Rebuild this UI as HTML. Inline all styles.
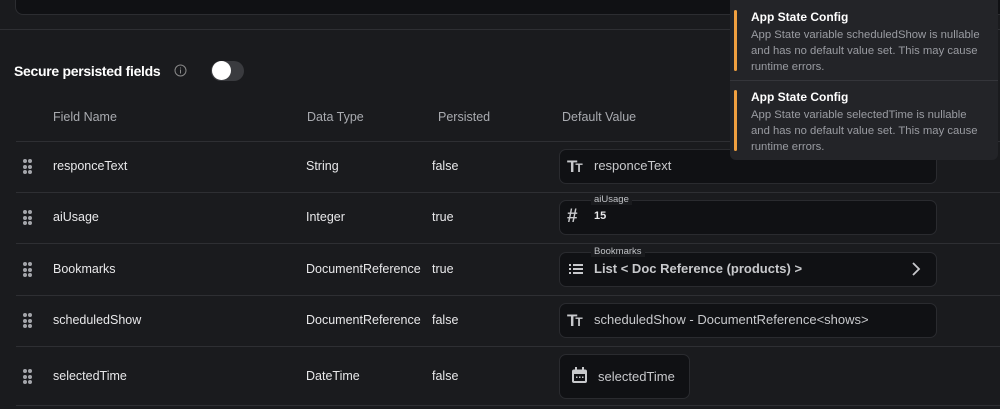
<!DOCTYPE html>
<html><head><style>
body{margin:0;width:1000px;height:409px;background:#1a1b1e;font-family:"Liberation Sans",sans-serif;overflow:hidden;position:relative;color:#e8e8ea}
.a{position:absolute}
.top{left:15px;top:-20px;width:1000px;height:33px;background:#101114;border:1px solid #2c2d31;border-radius:8px}
.hl{height:1px;background:#2e2f33}
.t{font-size:12.5px;white-space:nowrap}
.h{font-size:12.5px;color:#a9abb0;white-space:nowrap}
.box{background:#101114;border:1px solid #2a2b2f;border-radius:7px}
.dr{width:9px;height:15px}
.dr i{position:absolute;width:4px;height:4px;border-radius:50%;background:#a4a6ab}
.toast{left:730px;width:268px;background:#232428;}
.ob{width:3px;background:#f0a040;border-radius:2px}
.tt{font-size:12px;font-weight:bold;color:#fff}
.tb{font-size:11.3px;color:#9a9ca2;line-height:16px}
.lbl{font-size:9.5px;color:#bfc1c5;background:#1a1b1e;padding:0 3px}
</style></head><body>
<div class="a top"></div>
<div class="a hl" style="left:0;top:29px;width:1000px"></div>
<div class="a t" style="left:14px;top:63px;font-size:14px;font-weight:bold;color:#fff;letter-spacing:-0.3px">Secure persisted fields</div>
<svg class="a" style="left:174px;top:64px" width="13" height="13" viewBox="0 0 13 13"><circle cx="6.5" cy="6.5" r="5.5" fill="none" stroke="#888" stroke-width="1"/><rect x="6" y="5.5" width="1" height="4" fill="#888"/><rect x="6" y="3.5" width="1" height="1" fill="#888"/></svg>
<div class="a" style="left:211px;top:61px;width:33px;height:20px;border-radius:10px;background:#3a3b3f"></div>
<div class="a" style="left:212px;top:61px;width:19px;height:19px;border-radius:50%;background:#fff"></div>
<div class="a h" style="left:53px;top:110px">Field Name</div>
<div class="a h" style="left:307px;top:110px">Data Type</div>
<div class="a h" style="left:438px;top:110px">Persisted</div>
<div class="a h" style="left:562px;top:110px">Default Value</div>
<div class="a hl" style="left:16px;top:141px;width:984px"></div>
<div class="a hl" style="left:16px;top:192px;width:984px"></div>
<div class="a hl" style="left:16px;top:243px;width:984px"></div>
<div class="a hl" style="left:16px;top:295px;width:984px"></div>
<div class="a hl" style="left:16px;top:346px;width:984px"></div>
<div class="a hl" style="left:16px;top:405px;width:984px"></div>

<div class="a t" style="left:53px;top:159px">responceText</div><div class="a t" style="left:306px;top:159px">String</div><div class="a t" style="left:432px;top:159px">false</div>
<div class="a t" style="left:53px;top:210px">aiUsage</div><div class="a t" style="left:306px;top:210px">Integer</div><div class="a t" style="left:432px;top:210px">true</div>
<div class="a t" style="left:53px;top:262px">Bookmarks</div><div class="a t" style="left:306px;top:262px">DocumentReference</div><div class="a t" style="left:432px;top:262px">true</div>
<div class="a t" style="left:53px;top:313px">scheduledShow</div><div class="a t" style="left:306px;top:313px">DocumentReference</div><div class="a t" style="left:432px;top:313px">false</div>
<div class="a t" style="left:53px;top:369px">selectedTime</div><div class="a t" style="left:306px;top:369px">DateTime</div><div class="a t" style="left:432px;top:369px">false</div>

<div class="a dr" style="left:23px;top:159px"><i style="left:0;top:0"></i><i style="left:5px;top:0"></i><i style="left:0;top:5.5px"></i><i style="left:5px;top:5.5px"></i><i style="left:0;top:11px"></i><i style="left:5px;top:11px"></i></div>
<div class="a dr" style="left:23px;top:210px"><i style="left:0;top:0"></i><i style="left:5px;top:0"></i><i style="left:0;top:5.5px"></i><i style="left:5px;top:5.5px"></i><i style="left:0;top:11px"></i><i style="left:5px;top:11px"></i></div>
<div class="a dr" style="left:23px;top:262px"><i style="left:0;top:0"></i><i style="left:5px;top:0"></i><i style="left:0;top:5.5px"></i><i style="left:5px;top:5.5px"></i><i style="left:0;top:11px"></i><i style="left:5px;top:11px"></i></div>
<div class="a dr" style="left:23px;top:313px"><i style="left:0;top:0"></i><i style="left:5px;top:0"></i><i style="left:0;top:5.5px"></i><i style="left:5px;top:5.5px"></i><i style="left:0;top:11px"></i><i style="left:5px;top:11px"></i></div>
<div class="a dr" style="left:23px;top:369px"><i style="left:0;top:0"></i><i style="left:5px;top:0"></i><i style="left:0;top:5.5px"></i><i style="left:5px;top:5.5px"></i><i style="left:0;top:11px"></i><i style="left:5px;top:11px"></i></div>

<div class="a box" style="left:559px;top:149px;width:376px;height:33px"></div>
<div class="a" style="left:567px;top:157px;font-size:17px;font-weight:bold;color:#c8c9cc;letter-spacing:-2px">T<span style="font-size:12px">T</span></div>
<div class="a t" style="left:594px;top:158px;color:#c8c9cc;font-size:13px">responceText</div>

<div class="a box" style="left:559px;top:200px;width:376px;height:33px"></div>
<div class="a lbl" style="left:591px;top:194px">aiUsage</div>
<div class="a" style="left:567px;top:206px;font-size:19px;font-weight:bold;color:#c8c9cc">#</div>
<div class="a t" style="left:594px;top:210px;font-size:11px;font-weight:bold">15</div>

<div class="a box" style="left:559px;top:252px;width:376px;height:33px"></div>
<div class="a lbl" style="left:591px;top:246px">Bookmarks</div>
<svg class="a" style="left:569px;top:263px" width="14" height="11"><g fill="#c8c9cc"><rect x="0" y="1" width="2" height="2"/><rect x="0" y="5" width="2" height="2"/><rect x="0" y="9" width="2" height="2"/><rect x="4" y="1" width="10" height="2"/><rect x="4" y="5" width="10" height="2"/><rect x="4" y="9" width="10" height="2"/></g></svg>
<div class="a t" style="left:594px;top:261px;font-weight:bold;color:#c8c9cc;font-size:13px">List &lt; Doc Reference (products) &gt;</div>
<svg class="a" style="left:911px;top:261px" width="10" height="16"><path d="M2 2l6 6-6 6" stroke="#c8c9cc" stroke-width="1.8" fill="none"/></svg>

<div class="a box" style="left:559px;top:303px;width:376px;height:33px"></div>
<div class="a" style="left:567px;top:311px;font-size:17px;font-weight:bold;color:#c8c9cc;letter-spacing:-2px">T<span style="font-size:12px">T</span></div>
<div class="a t" style="left:594px;top:312px;color:#c8c9cc;font-size:13px">scheduledShow - DocumentReference&lt;shows&gt;</div>

<div class="a box" style="left:559px;top:354px;width:129px;height:43px"></div>
<svg class="a" style="left:571px;top:367px" width="17" height="17"><rect x="1" y="2.5" width="15" height="13.5" rx="2" fill="#c8c9cc"/><rect x="3" y="7" width="11" height="7" fill="#101114"/><rect x="4" y="0" width="2" height="4" fill="#c8c9cc"/><rect x="11" y="0" width="2" height="4" fill="#c8c9cc"/><g fill="#c8c9cc"><rect x="5" y="9.5" width="1.5" height="1.5"/><rect x="8" y="9.5" width="1.5" height="1.5"/><rect x="11" y="9.5" width="1.5" height="1.5"/></g></svg>
<div class="a t" style="left:598px;top:369px;color:#c8c9cc;font-size:13px">selectedTime</div>

<div class="a toast" style="top:0;height:160px;border-radius:0 0 6px 6px"></div>
<div class="a hl" style="left:730px;top:80px;width:268px;background:#34353a"></div>
<div class="a ob" style="left:734px;top:10px;height:61px"></div>
<div class="a ob" style="left:734px;top:90px;height:61px"></div>
<div class="a tt" style="left:751px;top:10px">App State Config</div>
<div class="a tb" style="left:751px;top:27px">App State variable scheduledShow is nullable<br>and has no default value set. This may cause<br>runtime errors.</div>
<div class="a tt" style="left:751px;top:90px">App State Config</div>
<div class="a tb" style="left:751px;top:107px">App State variable selectedTime is nullable<br>and has no default value set. This may cause<br>runtime errors.</div>
</body></html>
